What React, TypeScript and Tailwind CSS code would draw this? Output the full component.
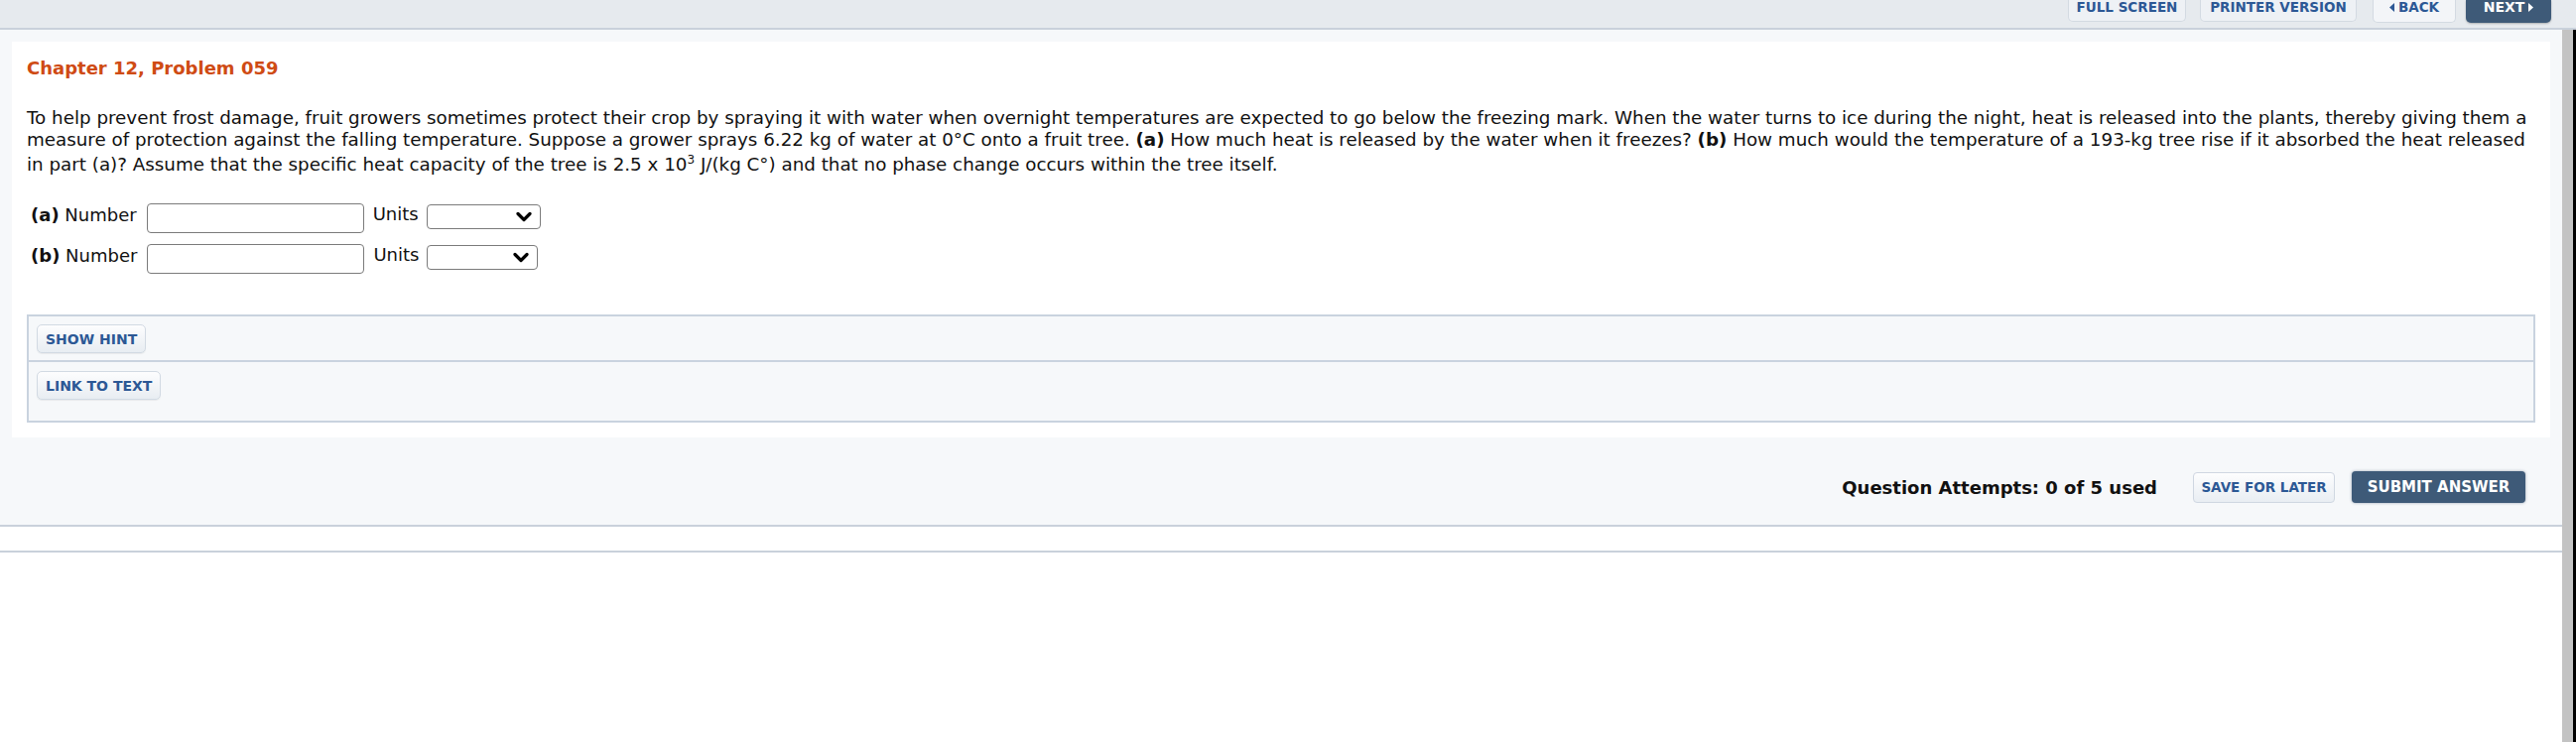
import React from 'react';

const Tri = ({ dir }: { dir: 'left' | 'right' }) => (
  <svg width="5" height="9" viewBox="0 0 5 9" className="shrink-0">
    {dir === 'left' ? (
      <path d="M5 0 L0 4.5 L5 9 Z" fill="currentColor" />
    ) : (
      <path d="M0 0 L5 4.5 L0 9 Z" fill="currentColor" />
    )}
  </svg>
);

const Chevron = () => (
  <svg width="16" height="11" viewBox="0 0 16 11">
    <polyline points="2,2.5 8,8.5 14,2.5" fill="none" stroke="#000" strokeWidth="3.2" strokeLinecap="round" strokeLinejoin="round" />
  </svg>
);

function AnswerRow({ part, selectWidth }: { part: string; selectWidth: string }) {
  return (
    <div className="flex items-start pl-[4px] text-[18px]">
      <span className="mt-[1px] leading-[22px]">
        <b>({part})</b> Number
      </span>
      <input
        type="text"
        className="ml-[10px] h-[30px] w-[219px] rounded-[4px] border-[1.5px] border-[#7b7b7b] bg-white"
      />
      <span className="ml-[9px] leading-[22px]">Units</span>
      <div
        className={`ml-[8px] mt-[1px] flex h-[25px] ${selectWidth} items-center justify-end rounded-[4px] border-[1.5px] border-[#7b7b7b] bg-white pr-[8px]`}
      >
        <Chevron />
      </div>
    </div>
  );
}

function HintButton({ label }: { label: string }) {
  return (
    <button className="h-[29px] rounded-[5px] border border-[#d2dae3] bg-gradient-to-b from-[#fdfdfe] to-[#e8edf2] px-[8px] text-[14px] font-bold leading-none text-[#2c5895] shadow-[0_1px_1px_rgba(0,0,0,0.06)]">
      {label}
    </button>
  );
}

export default function App() {
  return (
    <div className="flex h-[748px] w-[2596px] flex-col bg-white font-['DejaVu_Sans',Verdana,sans-serif] text-[17px] text-[#111]">
      {/* top toolbar */}
      <div className="flex h-[30px] shrink-0 items-start justify-end gap-[14px] border-b-2 border-[#c9d1db] bg-[#e6eaee] pr-[25px] text-[13.5px] font-bold leading-[15px]">
        <button className="flex h-[22px] w-[119px] items-start justify-center rounded-b-[5px] border border-t-0 border-[#d3dae2] bg-[#eef1f5] text-[#2c5895]">
          FULL SCREEN
        </button>
        <button className="flex h-[22px] w-[158px] items-start justify-center rounded-b-[5px] border border-t-0 border-[#d3dae2] bg-[#eef1f5] text-[#2c5895]">
          PRINTER VERSION
        </button>
        <button className="ml-[2px] flex h-[23px] w-[84px] items-start justify-center gap-[4px] rounded-b-[5px] border border-t-0 border-[#d3dae2] bg-[#f3f5f8] text-[#2c5895]">
          <span className="mt-[3px]">
            <Tri dir="left" />
          </span>
          BACK
        </button>
        <button className="-ml-[4px] flex h-[23px] w-[86px] items-start justify-center gap-[4px] rounded-b-[5px] bg-[#3e5a78] text-[14px] text-white shadow-[0_1px_2px_rgba(0,0,0,0.25)]">
          NEXT
          <span className="mt-[3px]">
            <Tri dir="right" />
          </span>
        </button>
      </div>

      <div className="flex flex-1">
        <div className="flex flex-1 flex-col">
          <div className="bg-[#f6f8fa] px-[12px] pt-[12px]">
            {/* question card */}
            <div className="bg-white px-[15px] pb-[15px] pt-[16px]">
              <h2 className="text-[18px] font-bold leading-[22px] text-[#cf4b14]">Chapter 12, Problem 059</h2>
              <p className="mt-[28px] text-[18.3px] leading-[22px]">
                To help prevent frost damage, fruit growers sometimes protect their crop by spraying it with water
                when overnight temperatures are expected to go below the freezing mark. When the water turns to ice
                during the night, heat is released into the plants, thereby giving them a measure of protection against
                the falling temperature. Suppose a grower sprays 6.22 kg of water at 0°C onto a fruit tree.{' '}
                <b>(a)</b> How much heat is released by the water when it freezes? <b>(b)</b> How much would the
                temperature of a 193-kg tree rise if it absorbed the heat released in part (a)? Assume that the
                specific heat capacity of the tree is 2.5 x 10
                <sup className="static align-super text-[12px] leading-normal">3</sup> J/(kg C°) and that no phase
                change occurs within the tree itself.
              </p>

              <div className="mt-[28px] flex flex-col gap-[11px]">
                <AnswerRow part="a" selectWidth="w-[115px]" />
                <AnswerRow part="b" selectWidth="w-[112px]" />
              </div>

              {/* hint / link panel */}
              <div className="mt-[41px] border-2 border-[#c9d3df] bg-[#f6f8fa]">
                <div className="px-[8px] pb-[7px] pt-[8px]">
                  <HintButton label="SHOW HINT" />
                </div>
                <div className="border-t-2 border-[#c9d3df] px-[8px] pb-[21px] pt-[9px]">
                  <HintButton label="LINK TO TEXT" />
                </div>
              </div>
            </div>

            {/* footer actions */}
            <div className="flex items-center justify-end pb-[22px] pr-[25px] pt-[34px]">
              <span className="text-[18px] font-bold">Question Attempts: 0 of 5 used</span>
              <button className="ml-[36px] h-[31px] w-[143px] rounded-[4px] border border-[#cfd7e1] bg-gradient-to-b from-[#fdfdfe] to-[#e9eef3] text-[13.5px] font-bold text-[#2c5895]">
                SAVE FOR LATER
              </button>
              <button className="ml-[17px] h-[32px] w-[175px] rounded-[4px] bg-[#3e5a78] text-[15px] font-bold text-white shadow-[0_0_3px_rgba(40,60,90,0.45)]">
                SUBMIT ANSWER
              </button>
            </div>
          </div>
          <div className="h-[28px] border-y-2 border-[#c9d1db] bg-white" />
        </div>

        {/* window edge */}
        <div className="w-[14px] shrink-0 border-r-[3px] border-black bg-[#c3c3c3]" />
      </div>
    </div>
  );
}
